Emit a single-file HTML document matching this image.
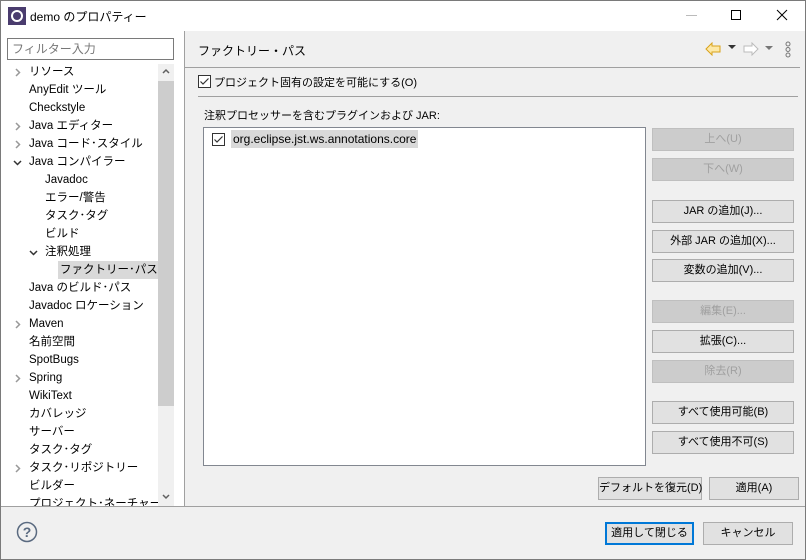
<!DOCTYPE html><html><head><meta charset="utf-8"><style>
*{box-sizing:border-box;margin:0;padding:0}
body{width:806px;height:560px;position:relative;overflow:hidden;background:#f0f0f0;font-family:"Liberation Sans","Noto Sans CJK JP",sans-serif;font-size:11px;color:#000}
.a{position:absolute;white-space:nowrap}
.btn{position:absolute;height:23px;border:1px solid #adadad;background:#e1e1e1;text-align:center;line-height:21px;font-size:11px;white-space:nowrap}
.dis{background:#cccccc;border-color:#bfbfbf;color:#a0a0a0}
.t{position:absolute;white-space:nowrap;line-height:18px;height:18px;font-size:11.5px}
</style></head><body>
<div class="a" style="left:0;top:0;width:806px;height:560px;border:1px solid #7a7a7a"></div>
<div class="a" style="left:1px;top:1px;width:804px;height:30px;background:#fff"></div>
<svg class="a" style="left:8px;top:7px" width="18" height="18"><rect x="0" y="0" width="18" height="18" fill="#4a3c6e"/><circle cx="9" cy="9" r="6" fill="#fff"/><circle cx="9" cy="9" r="4" fill="#4a3c6e"/></svg>
<div class="a" style="left:30px;top:8px;font-size:12px">demo のプロパティー</div>
<div class="a" style="left:686px;top:15px;width:11px;height:1px;background:#bbb"></div>
<div class="a" style="left:731px;top:10px;width:10px;height:10px;border:1px solid #000"></div>
<svg class="a" style="left:776px;top:9px" width="12" height="12"><path d="M1 1L11 11M11 1L1 11" stroke="#000" stroke-width="1"/></svg>
<!-- left -->
<div class="a" style="left:1px;top:31px;width:183px;height:475px;background:#fff"></div>
<div class="a" style="left:7px;top:38px;width:167px;height:22px;border:1px solid #7a7a7a;background:#fff;color:#777;padding-left:4px;line-height:20px;font-size:12px">フィルター入力</div>
<div class="a" style="left:158px;top:64px;width:16px;height:442px;background:#f0f0f0"></div>
<div class="a" style="left:158px;top:81px;width:16px;height:325px;background:#cdcdcd"></div>
<svg class="a" style="left:162px;top:68px" width="8" height="6"><path d="M1 5L4 2L7 5" fill="none" stroke="#606060" stroke-width="1.5"/></svg>
<svg class="a" style="left:162px;top:494px" width="8" height="6"><path d="M1 1L4 4L7 1" fill="none" stroke="#606060" stroke-width="1.5"/></svg>
<div class="a" style="left:184px;top:31px;width:1px;height:475px;background:#a0a0a0"></div>
<svg class="a" style="left:0;top:0" width="60" height="480">
<g fill="none" stroke="#999" stroke-width="1.5">
<path d="M16 69L19.5 72.5L16 76"/><path d="M16 123L19.5 126.5L16 130"/><path d="M16 141L19.5 144.5L16 148"/><path d="M16 321L19.5 324.5L16 328"/><path d="M16 375L19.5 378.5L16 382"/><path d="M16 465L19.5 468.5L16 472"/>
</g>
<g fill="none" stroke="#333" stroke-width="1.5"><path d="M14 161L17.5 164.5L21 161"/><path d="M30 251L33.5 254.5L37 251"/></g>
</svg>
<div class="t" style="left:29px;top:63px">リソース</div>
<div class="t" style="left:29px;top:81px">AnyEdit ツール</div>
<div class="t" style="left:29px;top:99px">Checkstyle</div>
<div class="t" style="left:29px;top:117px">Java エディター</div>
<div class="t" style="left:29px;top:135px">Java コード･スタイル</div>
<div class="t" style="left:29px;top:153px">Java コンパイラー</div>
<div class="t" style="left:45px;top:171px">Javadoc</div>
<div class="t" style="left:45px;top:189px">エラー/警告</div>
<div class="t" style="left:45px;top:207px">タスク･タグ</div>
<div class="t" style="left:45px;top:225px">ビルド</div>
<div class="t" style="left:45px;top:243px">注釈処理</div>
<div class="t" style="left:58px;top:261px;background:#d9d9d9;padding:0 2px;max-width:100px;overflow:hidden">ファクトリー･パス</div>
<div class="t" style="left:29px;top:279px">Java のビルド･パス</div>
<div class="t" style="left:29px;top:297px">Javadoc ロケーション</div>
<div class="t" style="left:29px;top:315px">Maven</div>
<div class="t" style="left:29px;top:333px">名前空間</div>
<div class="t" style="left:29px;top:351px">SpotBugs</div>
<div class="t" style="left:29px;top:369px">Spring</div>
<div class="t" style="left:29px;top:387px">WikiText</div>
<div class="t" style="left:29px;top:405px">カバレッジ</div>
<div class="t" style="left:29px;top:423px">サーバー</div>
<div class="t" style="left:29px;top:441px">タスク･タグ</div>
<div class="t" style="left:29px;top:459px">タスク･リポジトリー</div>
<div class="t" style="left:29px;top:477px">ビルダー</div>
<div class="a" style="left:1px;top:495px;width:157px;height:11px;overflow:hidden"><div class="t" style="left:28px;top:0px">プロジェクト･ネーチャー</div></div>
<!-- right -->
<div class="a" style="left:198px;top:42px;font-size:12px">ファクトリー・パス</div>
<svg class="a" style="left:705px;top:42px" width="16" height="14"><path d="M1 7L7 1V4H15V10H7V13Z" fill="#fde9a8" stroke="#d9a21a"/></svg>
<div class="a" style="left:728px;top:45px;border:4px solid transparent;border-top:4px solid #333"></div>
<svg class="a" style="left:743px;top:42px" width="16" height="14"><path d="M15 7L9 1V4H1V10H9V13Z" fill="#fff" stroke="#bbb"/></svg>
<div class="a" style="left:765px;top:46px;border:4px solid transparent;border-top:4px solid #777"></div>
<svg class="a" style="left:784px;top:41px" width="8" height="17"><circle cx="4" cy="3" r="2" fill="none" stroke="#777"/><circle cx="4" cy="8.5" r="2" fill="none" stroke="#777"/><circle cx="4" cy="14" r="2" fill="none" stroke="#777"/></svg>
<div class="a" style="left:185px;top:67px;width:615px;height:1px;background:#a0a0a0"></div>
<svg class="a" style="left:198px;top:75px" width="13" height="13"><rect x="0.5" y="0.5" width="12" height="12" fill="#fff" stroke="#333"/><path d="M2.5 6.5L5 9L10.5 3.5" fill="none" stroke="#333" stroke-width="1.2"/></svg>
<div class="a" style="left:214px;top:74px">プロジェクト固有の設定を可能にする(O)</div>
<div class="a" style="left:198px;top:96px;width:600px;height:1px;background:#a0a0a0"></div>
<div class="a" style="left:204px;top:107px">注釈プロセッサーを含むプラグインおよび JAR:</div>
<div class="a" style="left:203px;top:127px;width:443px;height:339px;background:#fff;border:1px solid #828790"></div>
<svg class="a" style="left:212px;top:133px" width="13" height="13"><rect x="0.5" y="0.5" width="12" height="12" fill="#fff" stroke="#333"/><path d="M2.5 6.5L5 9L10.5 3.5" fill="none" stroke="#333" stroke-width="1.2"/></svg>
<div class="a" style="left:231px;top:130px;background:#d9d9d9;padding:0 2px;line-height:18px;font-size:12px">org.eclipse.jst.ws.annotations.core</div>
<div class="btn dis" style="left:652px;top:128px;width:142px">上へ(U)</div>
<div class="btn dis" style="left:652px;top:158px;width:142px">下へ(W)</div>
<div class="btn" style="left:652px;top:200px;width:142px">JAR の追加(J)...</div>
<div class="btn" style="left:652px;top:230px;width:142px">外部 JAR の追加(X)...</div>
<div class="btn" style="left:652px;top:259px;width:142px">変数の追加(V)...</div>
<div class="btn dis" style="left:652px;top:300px;width:142px">編集(E)...</div>
<div class="btn" style="left:652px;top:330px;width:142px">拡張(C)...</div>
<div class="btn dis" style="left:652px;top:360px;width:142px">除去(R)</div>
<div class="btn" style="left:652px;top:401px;width:142px">すべて使用可能(B)</div>
<div class="btn" style="left:652px;top:431px;width:142px">すべて使用不可(S)</div>
<div class="btn" style="left:598px;top:477px;width:104px">デフォルトを復元(D)</div>
<div class="btn" style="left:709px;top:477px;width:90px">適用(A)</div>
<!-- bottom -->
<div class="a" style="left:1px;top:506px;width:804px;height:1px;background:#a0a0a0"></div>
<svg class="a" style="left:16px;top:521px" width="22" height="22"><circle cx="11" cy="11" r="9.5" fill="#f0f0f0" stroke="#5a6a80" stroke-width="1.5"/><text x="11" y="16" text-anchor="middle" font-family="Liberation Sans" font-weight="bold" font-size="14" fill="#5a6a80">?</text></svg>
<div class="btn" style="left:605px;top:522px;width:89px;border:2px solid #0078d7;line-height:19px">適用して閉じる</div>
<div class="btn" style="left:703px;top:522px;width:90px">キャンセル</div>
</body></html>
